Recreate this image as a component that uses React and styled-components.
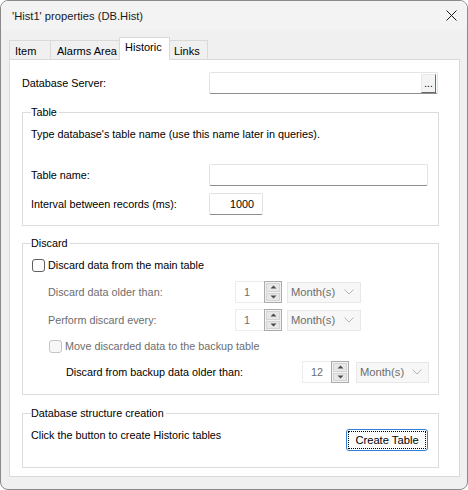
import React from 'react'
import styled, { createGlobalStyle } from 'styled-components'

const GlobalStyle = createGlobalStyle`
    html, body {
        margin: 0;
        padding: 0;
        background: #ffffff;
    }
    * {
        box-sizing: border-box;
    }
`

const FONT = `"Liberation Sans", Arial, sans-serif`

const Window = styled.div`
    width: 468px;
    height: 490px;
    border: 1px solid #8a8a8a;
    border-radius: 8px;
    overflow: hidden;
    background: #f0f0f0;
    display: flex;
    flex-direction: column;
    font-family: ${FONT};
    font-size: 10.8px;
    color: #000;
`

const TitleBar = styled.div`
    height: 29px;
    flex: none;
    display: flex;
    align-items: center;
    justify-content: space-between;
    padding: 0 9px 0 11px;
    background: #f3f3f3;
    font-size: 11.2px;
    color: #1a1a1a;
`

const CloseButton = styled.div`
    width: 14px;
    height: 14px;
    display: flex;
    align-items: center;
    justify-content: center;
`

const Body = styled.div`
    flex: 1;
    display: flex;
    flex-direction: column;
    padding: 7px 7px 12px 8px;
`

const TabStrip = styled.div`
    display: flex;
    align-items: flex-end;
    height: 23px;
    margin-bottom: -1px;
    position: relative;
    z-index: 1;
`

const Tab = styled.div`
    width: ${p => p.$w}px;
    height: ${p => (p.$active ? '23px' : '20px')};
    padding: ${p => (p.$active ? '2px' : '3px')} 0 0 ${p => p.$pl}px;
    margin-left: ${p => (p.$first ? '0' : '-1px')};
    border: 1px solid #d9d9d9;
    border-bottom: ${p => (p.$active ? 'none' : '1px solid #d9d9d9')};
    background: ${p => (p.$active ? '#ffffff' : '#f0f0f0')};
    white-space: nowrap;
    font-size: 11px;
    line-height: 14px;
`

const Panel = styled.div`
    flex: 1;
    border: 1px solid #d9d9d9;
    background: #ffffff;
    padding: 12px 20px 0 12px;
    display: flex;
    flex-direction: column;
`

const FieldRow = styled.div`
    display: flex;
    align-items: center;
    height: 22px;
    margin-top: ${p => p.$mt || 0}px;
    padding-left: ${p => p.$indent || 0}px;
`

const Label = styled.div`
    width: ${p => p.$w}px;
    flex: none;
    white-space: nowrap;
    color: ${p => (p.$disabled ? '#6d6d6d' : '#000')};
`

const TextBox = styled.div`
    width: ${p => p.$w}px;
    height: 22px;
    flex: none;
    display: flex;
    align-items: center;
    justify-content: ${p => (p.$right ? 'flex-end' : 'flex-start')};
    padding: 0 ${p => (p.$right ? '8px' : '1px')} 0 4px;
    background: #ffffff;
    border: 1px solid #e3e3e3;
    border-bottom-color: #8d8d8d;
    border-radius: 2px;
`

const BrowseButton = styled.div`
    margin-left: auto;
    width: 15px;
    height: 19px;
    border: 1px solid #e9e9e9;
    border-right-color: #696969;
    border-bottom-color: #696969;
    background: #f4f4f4;
    display: flex;
    align-items: flex-end;
    justify-content: center;
    padding-bottom: 4px;
    font-size: 10px;
    line-height: 8px;
`

const Group = styled.fieldset`
    margin: ${p => p.$mt || 0}px 0 0 0;
    padding: 0 9px ${p => p.$pb || 0}px 8px;
    border: 1px solid #dcdcdc;
    min-width: 0;
`

const Legend = styled.legend`
    padding: 0 2px 0 0;
    margin-left: 0;
    line-height: 14px;
`

const Text = styled.div`
    line-height: 14px;
    margin-top: ${p => p.$mt || 0}px;
    color: ${p => (p.$disabled ? '#6d6d6d' : '#000')};
`

const CheckRow = styled.label`
    display: flex;
    align-items: center;
    height: 16px;
    margin-top: ${p => p.$mt || 0}px;
    padding-left: ${p => p.$indent || 0}px;
    gap: 3px;
    color: ${p => (p.$disabled ? '#6d6d6d' : '#000')};
`

const CheckBox = styled.span`
    width: 13px;
    height: 13px;
    flex: none;
    border-radius: 3px;
    border: 1px solid ${p => (p.$disabled ? '#c4c4c4' : '#5f5f5f')};
    background: ${p => (p.$disabled ? '#f7f7f7' : '#fdfdfd')};
`

const Spin = styled.div`
    display: flex;
    flex: none;
    height: 22px;
`

const SpinInput = styled.div`
    width: 29px;
    height: 22px;
    display: flex;
    align-items: center;
    padding-left: 8px;
    background: #ffffff;
    border: 1px solid #ececec;
    border-right: none;
    color: #6d6d6d;
`

const SpinButtons = styled.div`
    width: 18px;
    display: flex;
    flex-direction: column;
    border: 1px solid #ababab;
    background: #f2f2f2;
    padding: 1px;
    gap: 1px;
`

const SpinHalf = styled.div`
    flex: 1;
    display: flex;
    align-items: center;
    justify-content: center;
    background: #e7e7e7;
    border: 1px solid #d4d4d4;
`

const Combo = styled.div`
    width: 74px;
    height: 21px;
    margin-left: ${p => p.$ml || 5}px;
    display: flex;
    align-items: center;
    justify-content: space-between;
    padding: 0 6px 0 3px;
    background: #f7f7f7;
    border: 1px solid #e8e8e8;
    color: #6d6d6d;
    font-size: 11.2px;
`

const ActionRow = styled.div`
    display: flex;
    justify-content: space-between;
    align-items: flex-start;
    margin-top: 8px;
`

const PushButton = styled.div`
    width: 82px;
    height: 22px;
    margin-top: 1px;
    margin-right: 1px;
    border: 1px solid #2f80d9;
    border-radius: 3px;
    background: #fcfcfc;
    padding: 1px;
    display: flex;
`

const FocusRect = styled.div`
    flex: 1;
    display: flex;
    align-items: center;
    justify-content: center;
    border: 1px dotted #000;
    font-size: 11.2px;
`

const Arrow = ({ up }) => (
    <svg width="7" height="4" viewBox="0 0 7 4">
        <path d={up ? 'M0.5 3.5 L3.5 0.5 L6.5 3.5 Z' : 'M0.5 0.5 L3.5 3.5 L6.5 0.5 Z'} fill="#4a4a4a" />
    </svg>
)

const Chevron = () => (
    <svg width="10" height="6" viewBox="0 0 10 6">
        <path d="M0.5 0.5 L5 5 L9.5 0.5" fill="none" stroke="#b4b4b4" strokeWidth="1" />
    </svg>
)

const SpinBox = ({ value }) => (
    <Spin>
        <SpinInput>{value}</SpinInput>
        <SpinButtons>
            <SpinHalf><Arrow up /></SpinHalf>
            <SpinHalf><Arrow /></SpinHalf>
        </SpinButtons>
    </Spin>
)

const tabs = [
    { label: 'Item', w: 42, pl: 5 },
    { label: 'Alarms Area', w: 70, pl: 6 },
    { label: 'Historic', w: 51, pl: 5 },
    { label: 'Links', w: 39, pl: 4 },
]

export default function App() {
    return (
        <>
            <GlobalStyle />
            <Window>
                <TitleBar>
                    <span>'Hist1' properties (DB.Hist)</span>
                    <CloseButton>
                        <svg width="11" height="11" viewBox="0 0 11 11">
                            <path d="M0.5 0.5 L10.5 10.5 M10.5 0.5 L0.5 10.5" stroke="#1a1a1a" strokeWidth="1" />
                        </svg>
                    </CloseButton>
                </TitleBar>
                <Body>
                    <TabStrip>
                        {tabs.map((t, i) => (
                            <Tab key={t.label} $w={t.w} $pl={t.pl} $first={i === 0} $active={t.label === 'Historic'}>
                                {t.label}
                            </Tab>
                        ))}
                    </TabStrip>
                    <Panel>
                        <FieldRow>
                            <Label $w={187}>Database Server:</Label>
                            <TextBox $w={229}>
                                <BrowseButton>...</BrowseButton>
                            </TextBox>
                        </FieldRow>

                        <Group $mt={11} $pb={10}>
                            <Legend>Table</Legend>
                            <Text $mt={8}>Type database's table name (use this name later in queries).</Text>
                            <FieldRow $mt={23}>
                                <Label $w={178}>Table name:</Label>
                                <TextBox $w={219} />
                            </FieldRow>
                            <FieldRow $mt={7}>
                                <Label $w={178}>Interval between records (ms):</Label>
                                <TextBox $w={54} $right>1000</TextBox>
                            </FieldRow>
                        </Group>

                        <Group $mt={10} $pb={11}>
                            <Legend>Discard</Legend>
                            <CheckRow $mt={7} $indent={1}>
                                <CheckBox />
                                Discard data from the main table
                            </CheckRow>
                            <FieldRow $mt={8} $indent={17}>
                                <Label $w={187} $disabled>Discard data older than:</Label>
                                <SpinBox value="1" />
                                <Combo>Month(s)<Chevron /></Combo>
                            </FieldRow>
                            <FieldRow $mt={6} $indent={17}>
                                <Label $w={187} $disabled>Perform discard every:</Label>
                                <SpinBox value="1" />
                                <Combo>Month(s)<Chevron /></Combo>
                            </FieldRow>
                            <CheckRow $mt={7} $indent={18} $disabled>
                                <CheckBox $disabled />
                                Move discarded data to the backup table
                            </CheckRow>
                            <FieldRow $mt={7} $indent={35}>
                                <Label $w={236}>Discard from backup data older than:</Label>
                                <SpinBox value="12" />
                                <Combo $ml={7}>Month(s)<Chevron /></Combo>
                            </FieldRow>
                        </Group>

                        <Group $mt={11} $pb={16}>
                            <Legend>Database structure creation</Legend>
                            <ActionRow>
                                <Text>Click the button to create Historic tables</Text>
                                <PushButton>
                                    <FocusRect>Create Table</FocusRect>
                                </PushButton>
                            </ActionRow>
                        </Group>
                    </Panel>
                </Body>
            </Window>
        </>
    )
}
